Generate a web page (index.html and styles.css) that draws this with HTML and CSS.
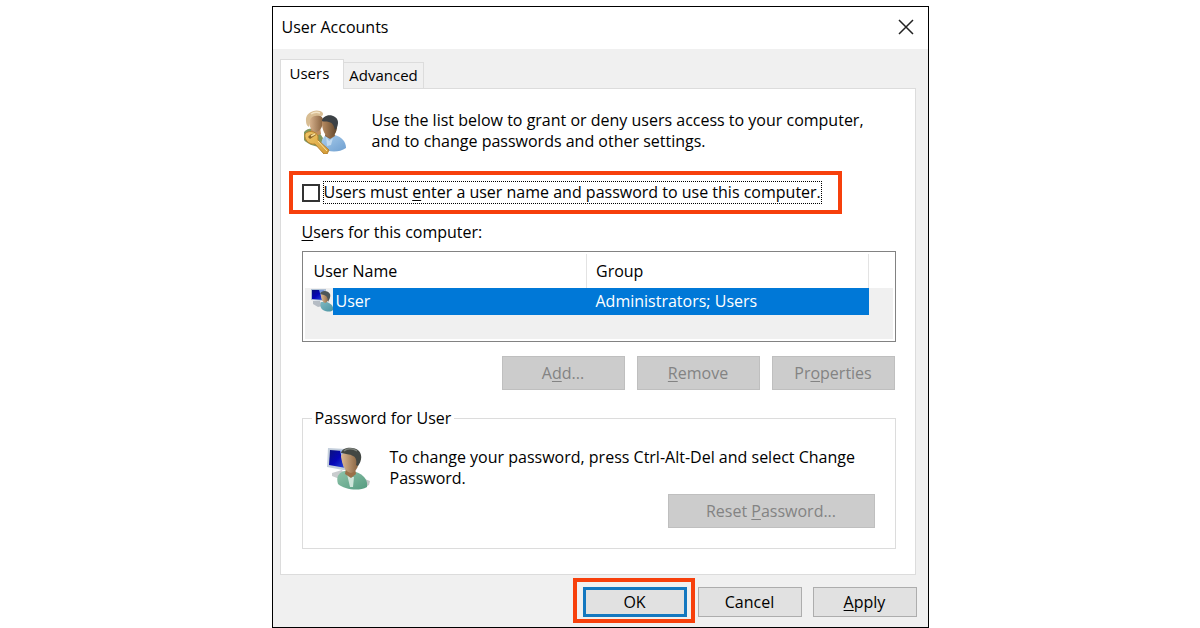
FILE: index.html
```html
<!DOCTYPE html>
<html lang="en">
<head>
<meta charset="utf-8">
<meta name="viewport" content="width=device-width, initial-scale=1">
<title>User Accounts</title>
<link rel="stylesheet" href="styles.css">
</head>
<body>
<svg class="defs" aria-hidden="true">
  <defs>
    <linearGradient id="screen" x1="0" y1="0" x2="1" y2="1"><stop offset="0" stop-color="#0a1278"/><stop offset=".5" stop-color="#0606b8"/><stop offset="1" stop-color="#2a50d8"/></linearGradient>
    <linearGradient id="skin" x1="0" y1="0" x2="1" y2="0"><stop offset="0" stop-color="#dcb893"/><stop offset="1" stop-color="#86603d"/></linearGradient>
    <linearGradient id="dark" x1="0" y1="0" x2="1" y2="0"><stop offset="0" stop-color="#b98c62"/><stop offset="1" stop-color="#5e4429"/></linearGradient>
    <linearGradient id="green" x1="0" y1="0" x2="1" y2="1"><stop offset="0" stop-color="#8fc4aa"/><stop offset="1" stop-color="#559b80"/></linearGradient>
    <linearGradient id="teal" x1="0" y1="0" x2="1" y2="1"><stop offset="0" stop-color="#7fb8c0"/><stop offset="1" stop-color="#4a94a4"/></linearGradient>
    <linearGradient id="blue" x1="0" y1="0" x2="1" y2="1"><stop offset="0" stop-color="#a9cdec"/><stop offset="1" stop-color="#6f9fd0"/></linearGradient>
    <linearGradient id="gold" x1="0" y1="0" x2="1" y2="1"><stop offset="0" stop-color="#f0c868"/><stop offset="1" stop-color="#d39a35"/></linearGradient>
    <symbol id="pc-user" viewBox="0 0 44 44">
      <path d="M6 26l10-3 5 9-5 1-10-4z" fill="#c9ccce"/>
      <path d="M36 31l8 3-1 4-6 3z" fill="#c4c6c7"/>
      <path d="M2 1l18 1 2 21-5 0L1 20z" fill="#c3cedb"/>
      <path d="M4 3l13 1 3 17L3 18z" fill="url(#screen)"/>
      <path d="M14 3l5 0 3 19-4-1z" fill="#a9c0ee"/>
      <path d="M18 24c-6 2-8 7-6 13 6 5 20 8 29 3 1-7-3-12-11-15z" fill="url(#green)"/>
      <path d="M21 27l4 3 3 0-1 10-3 0z" fill="#cfe5da"/>
      <path d="M20 21h9l1 6-5 4-6-4z" fill="#9b7048"/>
      <path d="M15 9c2-5 13-6 17 0 2 8-1 16-7 17-6-1-9-8-10-17z" fill="url(#skin)"/>
      <path d="M15 6c1-6 13-7 18-2 4 5 2 11-1 15l-2-1c1-4 0-8-3-9-3-2-8-2-12-3z" fill="#434743"/>
      <path d="M18 4c3-3 9-3 13 0" fill="none" stroke="#7c817b" stroke-width="1.5"/>
    </symbol>
    <symbol id="pc-user-small" viewBox="0 0 23 24">
      <path d="M3 13l7 0 2 5-4 1-5-3z" fill="#b5bcc4"/>
      <path d="M1 1h15v12L1 12z" fill="#aebfd3"/>
      <path d="M2 2l9 0 2 10-11-1z" fill="url(#screen)"/>
      <path d="M9 2h5l1 10-3 0z" fill="#7697dc"/>
      <path d="M11 14c-1 3-1 6 2 8 4 2 8 2 10 0 1-4-2-6-6-8z" fill="url(#teal)"/>
      <path d="M11 6c1-3 7-3 8 0 1 4-1 8-4 9-3-1-4-5-4-9z" fill="url(#skin)"/>
      <path d="M10 6c1-4 8-4 10 0 1 3-1 6-2 8 0-4-1-6-4-7z" fill="#4d5659"/>
    </symbol>
    <symbol id="users-key" viewBox="0 0 44 44">
      <path d="M2 22c3-4 8-4 13-3l6 9-2 9C12 37 4 33 2 30z" fill="#7f9861"/>
      <path d="M9 17h9l1 7-5 2-5-3z" fill="#bd8d5f"/>
      <path d="M7 8c2-4 12-5 14 1 0 7-2 12-7 13-5-1-8-7-7-14z" fill="url(#skin)"/>
      <path d="M4 11C3 3 12-1 18 1c3 1 4 3 2 5-6-1-11 0-12 4l-1 7c-2-1-3-3-3-6z" fill="#d8bd93"/>
      <path d="M9 4c3-2 6-2 9-1" fill="none" stroke="#f3e3c5" stroke-width="1.5"/>
      <path d="M24 25c-4 3-6 9-4 14 7 3 17 4 24-1 0-6-4-11-11-13z" fill="url(#blue)"/>
      <path d="M24 26l3 5 4-3-2 7-4 1z" fill="#c2daef"/>
      <path d="M24 21h8l1 5-5 3-5-3z" fill="#8b623c"/>
      <path d="M20 13c1-7 14-7 15 0 1 7-2 13-7 15-5-2-8-8-8-15z" fill="url(#dark)"/>
      <path d="M20 11c0-5 8-8 13-4 5 3 3 10 0 13-1-4-2-7-6-8-3-1-5 0-7-1z" fill="#3c4145"/>
      <path d="M3 24c3-4 11-3 13 2v4l11 10-2 4h-3l-9-10c-6 1-11-4-10-10z" fill="url(#gold)" stroke="#b5812f"/>
      <path d="M6 27c2-3 5-4 7-3l1 1-6 4z" fill="#8a6428"/>
      <path d="M9 26l4-2" stroke="#f5dc9a" stroke-width="1.5"/>
      <path d="M16 31l9 10" stroke="#fae3a1"/>
    </symbol>
  </defs>
</svg>

<main class="dialog" role="dialog" aria-labelledby="dialog-title">
  <header class="titlebar">
    <h1 class="title" id="dialog-title">User Accounts</h1>
    <button class="close" type="button" aria-label="Close">
      <svg width="16" height="16" viewBox="0 0 16 16"><path d="M1 1l14 14M15 1L1 15" fill="none" stroke="#222" stroke-width="1.5"/></svg>
    </button>
  </header>

  <div class="content">
    <div class="tabs" role="tablist">
      <button class="tab tab-active" type="button" role="tab" aria-selected="true">Users</button>
      <button class="tab" type="button" role="tab" aria-selected="false">Advanced</button>
    </div>

    <section class="panel" role="tabpanel">
      <div class="intro">
        <svg class="icon"><use href="#users-key"/></svg>
        <p class="text">Use the list below to grant or deny users access to your computer, and to change passwords and other settings.</p>
      </div>

      <div class="require">
        <input class="checkbox" type="checkbox" id="require-password">
        <label class="require-label" for="require-password">Users must <u>e</u>nter a user name and password to use this computer.</label>
      </div>

      <p class="list-label" id="list-label"><u>U</u>sers for this computer:</p>
      <div class="list">
        <table class="table" aria-labelledby="list-label">
          <colgroup><col class="col-name"><col class="col-group"><col></colgroup>
          <thead><tr><th>User Name</th><th>Group</th><td></td></tr></thead>
          <tbody>
            <tr>
              <td class="name-cell"><div class="name"><svg class="icon-small"><use href="#pc-user-small"/></svg><span class="name-text">User</span></div></td>
              <td class="selected">Administrators; Users</td>
              <td></td>
            </tr>
          </tbody>
        </table>
      </div>

      <div class="actions">
        <button class="button button-wide" type="button" disabled>A<u>d</u>d...</button>
        <button class="button button-wide" type="button" disabled><u>R</u>emove</button>
        <button class="button button-wide" type="button" disabled>Pr<u>o</u>perties</button>
      </div>

      <fieldset class="group">
        <legend class="legend">Password for User</legend>
        <div class="group-row">
          <svg class="icon"><use href="#pc-user"/></svg>
          <p class="text">To change your password, press Ctrl-Alt-Del and select Change Password.</p>
        </div>
        <div class="group-actions">
          <button class="button button-reset" type="button" disabled>Reset <u>P</u>assword...</button>
        </div>
      </fieldset>
    </section>

    <footer class="footer">
      <button class="button button-ok" type="button">OK</button>
      <button class="button" type="button">Cancel</button>
      <button class="button" type="button"><u>A</u>pply</button>
    </footer>
  </div>
</main>
</body>
</html>
```
FILE: styles.css
```css
* { box-sizing: border-box; }

body {
  margin: 0;
  padding-top: 6px;
  display: flex;
  justify-content: center;
  background: #fff;
  color: #000;
  font: 16px/21px "Open Sans", "Noto Sans", sans-serif;
}

button, input { font: inherit; color: inherit; }
p, h1 { margin: 0; }
u { text-underline-offset: 2px; }
.defs { position: absolute; width: 0; height: 0; }

.dialog {
  width: 100%;
  max-width: 657px;
  border: 1px solid #000;
  background: #f0f0f0;
}

.titlebar {
  display: flex;
  align-items: center;
  justify-content: space-between;
  height: 42px;
  padding: 0 10px 2px 9px;
  background: #fff;
}
.title { font-size: 16px; font-weight: 400; }
.close {
  display: flex;
  padding: 4px;
  border: 0;
  background: none;
}

.content { padding: 10px 12px 10px 7px; }

.tabs { display: flex; align-items: flex-end; }
.tab {
  height: 26px;
  padding: 0 5px;
  border: 1px solid #dcdcdc;
  border-width: 1px 1px 0 0;
  background: #f0f0f0;
  font-size: 15px;
}
.tab-active {
  position: relative;
  height: 30px;
  margin-bottom: -1px;
  padding: 0 14px 2px 9px;
  border-left-width: 1px;
  background: #fff;
}

.panel {
  padding: 21px 19px 25px 21px;
  border: 1px solid #dcdcdc;
  background: #fff;
}

.intro { display: flex; gap: 26px; }
.icon { flex: none; width: 44px; height: 44px; }

.require {
  display: flex;
  align-items: center;
  gap: 3px;
  width: fit-content;
  height: 43px;
  margin: 17px 0 0 -13px;
  padding: 0 16px 0 9px;
  border: 4px solid #f7400c;
}
.checkbox {
  appearance: none;
  flex: none;
  width: 18px;
  height: 18px;
  margin: 0;
  border: 2px solid #333;
  background: #fff;
}
.require-label { border: 1px dotted #000; }

.list-label { margin-top: 8px; }
.list {
  margin-top: 8px;
  padding: 2px;
  height: 91px;
  border: 1px solid #828282;
}
.list::after {
  content: "";
  display: block;
  height: 24px;
  background: #f0f0f0;
}
.table {
  width: 100%;
  table-layout: fixed;
  border-collapse: collapse;
}
.col-name { width: 282px; }
.col-group { width: 282px; }
.table th {
  height: 34px;
  padding: 0 9px;
  border-right: 1px solid #e3e3e3;
  font-weight: 400;
  text-align: left;
}
.table tbody td { height: 27px; padding: 0 9px; background: #f0f0f0; }
.table tbody .name-cell { padding: 0; }
.name { display: flex; height: 27px; padding-left: 5px; }
.icon-small { flex: none; width: 23px; height: 24px; }
.name-text { flex: 1; padding: 3px; background: #0078d7; color: #fff; }
.table tbody .selected { background: #0078d7; color: #fff; }

.button {
  min-width: 104px;
  height: 30px;
  padding: 0 8px;
  border: 1px solid #adadad;
  background: #e1e1e1;
}
.button:disabled {
  height: 34px;
  border-color: #bfbfbf;
  background: #ccc;
  color: #838383;
}
.button-wide { width: 123px; }
.button-reset { width: 207px; }

.actions {
  display: flex;
  justify-content: flex-end;
  gap: 12px;
  margin: 14px 1px 0 0;
}

.group {
  margin: 18px 0 0;
  padding: 18px 20px 20px 23px;
  border: 1px solid #dcdcdc;
}
.legend { margin-left: -14px; padding: 0 3px; }
.group-row { display: flex; gap: 20px; }
.group-actions { display: flex; justify-content: flex-end; margin-top: 3px; }

.footer {
  display: flex;
  justify-content: flex-end;
  gap: 11px;
  margin: 12px -1px 0 0;
}
.button-ok {
  position: relative;
  border: 3px solid #1478c0;
}
.button-ok::after {
  content: "";
  position: absolute;
  inset: -12px -11px -9px -13px;
  border: 4px solid #f7400c;
}
```
